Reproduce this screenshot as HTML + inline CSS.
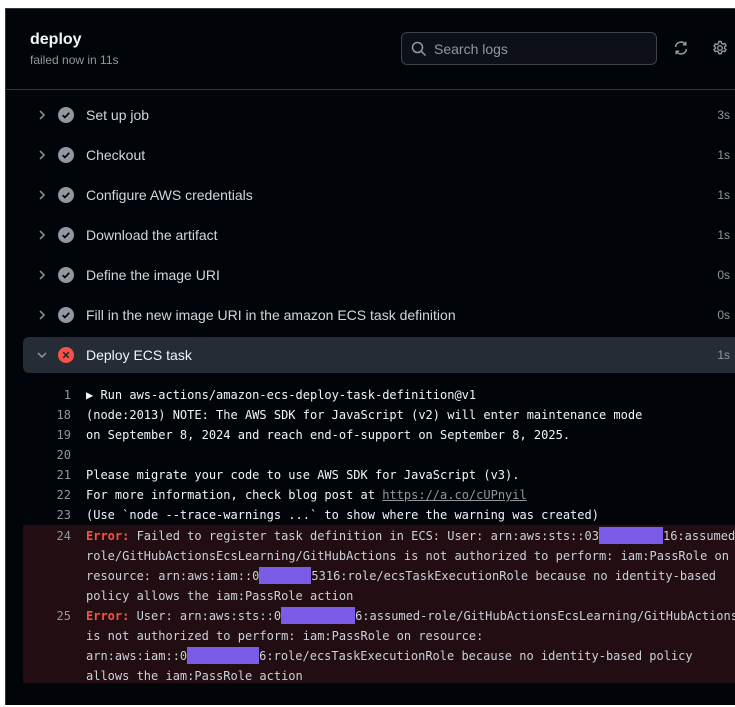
<!DOCTYPE html>
<html><head><meta charset="utf-8"><style>
*{margin:0;padding:0;box-sizing:border-box}
body{width:735px;height:707px;background:#fff;position:relative;overflow:hidden;font-family:"Liberation Sans",sans-serif}
.panel{position:absolute;left:5px;top:8px;width:740px;height:697px;background:#010409;border-left:1px solid #30363d;border-top:1px solid #30363d;overflow:hidden}
.abs{position:absolute}
.title{left:24px;top:22px;color:#f0f6fc;font-weight:bold;font-size:16px}
.sub{left:24px;top:44px;color:#9198a1;font-size:12px}
.search{left:395px;top:23px;width:256px;height:33px;border:1px solid #3d444d;border-radius:6px;background:#0d1117;color:#9198a1;font-size:14px;padding:8px 0 0 32px}
.div{left:0;top:80px;width:740px;height:1px;background:#30363d}
.row{position:absolute;left:17px;width:720px;height:36px;border-radius:6px;color:#d1d7e0;font-size:14px}
.row .l{position:absolute;left:63px;top:10px}
.row .t{position:absolute;right:13px;top:11px;font-size:12px;color:#9198a1}
.row svg{position:absolute}
.log{position:absolute;left:17px;font-family:"DejaVu Sans Mono",monospace;font-size:12px;color:#f0f6fc;line-height:20px}
.log>div{position:relative;height:20px}
.ln{position:absolute;width:48px;text-align:right;color:#9198a1}
.tx{position:absolute;left:63px;white-space:pre}
.err{color:#f85149;font-weight:bold}
.er .tx{color:#c9d1d9}
.red{display:inline-block;background:#7b5ce9;height:17px;vertical-align:-4px}
</style></head><body>
<div class="panel">
<div class="abs title">deploy</div>
<div class="abs sub">failed now in 11s</div>
<div class="abs search">Search logs
<svg class="abs" style="left:9px;top:8px" width="16" height="16" viewBox="0 0 16 16"><circle cx="6.5" cy="6.5" r="5" fill="none" stroke="#9198a1" stroke-width="1.5"/><path d="M10.2 10.2L14.5 14.5" stroke="#9198a1" stroke-width="1.5"/></svg></div>
<svg class="abs" style="left:667px;top:31px" width="16" height="16" viewBox="0 0 16 16" fill="none" stroke="#9198a1" stroke-width="1.5"><path d="M2.5 7A5.5 5.5 0 0 1 12.5 4.5M13.5 9A5.5 5.5 0 0 1 3.5 11.5"/><path d="M12.8 1.8v3h-3M3.2 14.2v-3h3"/></svg>
<svg class="abs" style="left:706px;top:31px" width="16" height="16" viewBox="0 0 16 16" fill="none" stroke="#9198a1" stroke-width="1.4"><circle cx="8" cy="8" r="2.3"/><path d="M6.8 1.5h2.4l.4 1.8 1.4.8 1.8-.6 1.2 2.1-1.4 1.2v1.6l1.4 1.2-1.2 2.1-1.8-.6-1.4.8-.4 1.8H6.8l-.4-1.8-1.4-.8-1.8.6-1.2-2.1 1.4-1.2V7.2L2 6l1.2-2.1 1.8.6 1.4-.8z"/></svg>
<div class="abs div"></div>

<div class="row" style="top:88px"><svg style="left:13px;top:12px" width="12" height="12" viewBox="0 0 12 12"><path d="M4 2l4 4-4 4" fill="none" stroke="#9198a1" stroke-width="1.5"/></svg><svg style="left:35px;top:10px" width="16" height="16"><circle cx="8" cy="8" r="8" fill="#9198a1"/><path d="M4.6 8.2l2.3 2.2 4.4-4.6" fill="none" stroke="#010409" stroke-width="1.7"/></svg><span class="l">Set up job</span><span class="t">3s</span></div>
<div class="row" style="top:128px"><svg style="left:13px;top:12px" width="12" height="12" viewBox="0 0 12 12"><path d="M4 2l4 4-4 4" fill="none" stroke="#9198a1" stroke-width="1.5"/></svg><svg style="left:35px;top:10px" width="16" height="16"><circle cx="8" cy="8" r="8" fill="#9198a1"/><path d="M4.6 8.2l2.3 2.2 4.4-4.6" fill="none" stroke="#010409" stroke-width="1.7"/></svg><span class="l">Checkout</span><span class="t">1s</span></div>
<div class="row" style="top:168px"><svg style="left:13px;top:12px" width="12" height="12" viewBox="0 0 12 12"><path d="M4 2l4 4-4 4" fill="none" stroke="#9198a1" stroke-width="1.5"/></svg><svg style="left:35px;top:10px" width="16" height="16"><circle cx="8" cy="8" r="8" fill="#9198a1"/><path d="M4.6 8.2l2.3 2.2 4.4-4.6" fill="none" stroke="#010409" stroke-width="1.7"/></svg><span class="l">Configure AWS credentials</span><span class="t">1s</span></div>
<div class="row" style="top:208px"><svg style="left:13px;top:12px" width="12" height="12" viewBox="0 0 12 12"><path d="M4 2l4 4-4 4" fill="none" stroke="#9198a1" stroke-width="1.5"/></svg><svg style="left:35px;top:10px" width="16" height="16"><circle cx="8" cy="8" r="8" fill="#9198a1"/><path d="M4.6 8.2l2.3 2.2 4.4-4.6" fill="none" stroke="#010409" stroke-width="1.7"/></svg><span class="l">Download the artifact</span><span class="t">1s</span></div>
<div class="row" style="top:248px"><svg style="left:13px;top:12px" width="12" height="12" viewBox="0 0 12 12"><path d="M4 2l4 4-4 4" fill="none" stroke="#9198a1" stroke-width="1.5"/></svg><svg style="left:35px;top:10px" width="16" height="16"><circle cx="8" cy="8" r="8" fill="#9198a1"/><path d="M4.6 8.2l2.3 2.2 4.4-4.6" fill="none" stroke="#010409" stroke-width="1.7"/></svg><span class="l">Define the image URI</span><span class="t">0s</span></div>
<div class="row" style="top:288px"><svg style="left:13px;top:12px" width="12" height="12" viewBox="0 0 12 12"><path d="M4 2l4 4-4 4" fill="none" stroke="#9198a1" stroke-width="1.5"/></svg><svg style="left:35px;top:10px" width="16" height="16"><circle cx="8" cy="8" r="8" fill="#9198a1"/><path d="M4.6 8.2l2.3 2.2 4.4-4.6" fill="none" stroke="#010409" stroke-width="1.7"/></svg><span class="l">Fill in the new image URI in the amazon ECS task definition</span><span class="t">0s</span></div>
<div class="row" style="top:328px;background:#262c36;color:#f0f6fc"><svg style="left:13px;top:12px" width="12" height="12" viewBox="0 0 12 12"><path d="M2 4l4 4 4-4" fill="none" stroke="#9198a1" stroke-width="1.5"/></svg><svg style="left:35px;top:10px" width="16" height="16"><circle cx="8" cy="8" r="8" fill="#f85149"/><path d="M5.2 5.2l5.6 5.6M10.8 5.2l-5.6 5.6" stroke="#262c36" stroke-width="1.6"/></svg><span class="l">Deploy ECS task</span><span class="t">1s</span></div>

<div class="log" style="top:376px;width:720px"><div><span class="ln">1</span><span class="tx">▶ Run aws-actions/amazon-ecs-deploy-task-definition@v1</span></div><div><span class="ln">18</span><span class="tx">(node:2013) NOTE: The AWS SDK for JavaScript (v2) will enter maintenance mode</span></div><div><span class="ln">19</span><span class="tx">on September 8, 2024 and reach end-of-support on September 8, 2025.</span></div><div><span class="ln">20</span><span class="tx"></span></div><div><span class="ln">21</span><span class="tx">Please migrate your code to use AWS SDK for JavaScript (v3).</span></div><div><span class="ln">22</span><span class="tx">For more information, check blog post at <u style="color:#9198a1">https://a.co/cUPnyil</u></span></div><div><span class="ln">23</span><span class="tx">(Use `node --trace-warnings ...` to show where the warning was created)</span></div><div class="er" style="height:158px;background:#220e12"><span class="ln" style="top:1px">24</span><span class="tx" style="top:1px"><span class="err">Error:</span> Failed to register task definition in ECS: User: arn:aws:sts::03<span class="red" style="width:64px"></span>16:assumed-
role/GitHubActionsEcsLearning/GitHubActions is not authorized to perform: iam:PassRole on
resource: arn:aws:iam::0<span class="red" style="width:52px"></span>5316:role/ecsTaskExecutionRole because no identity-based
policy allows the iam:PassRole action</span><span class="ln" style="top:81px">25</span><span class="tx" style="top:81px"><span class="err">Error:</span> User: arn:aws:sts::0<span class="red" style="width:74px"></span>6:assumed-role/GitHubActionsEcsLearning/GitHubActions
is not authorized to perform: iam:PassRole on resource:
arn:aws:iam::0<span class="red" style="width:72px"></span>6:role/ecsTaskExecutionRole because no identity-based policy
allows the iam:PassRole action</span></div></div>
</div>
</body></html>
